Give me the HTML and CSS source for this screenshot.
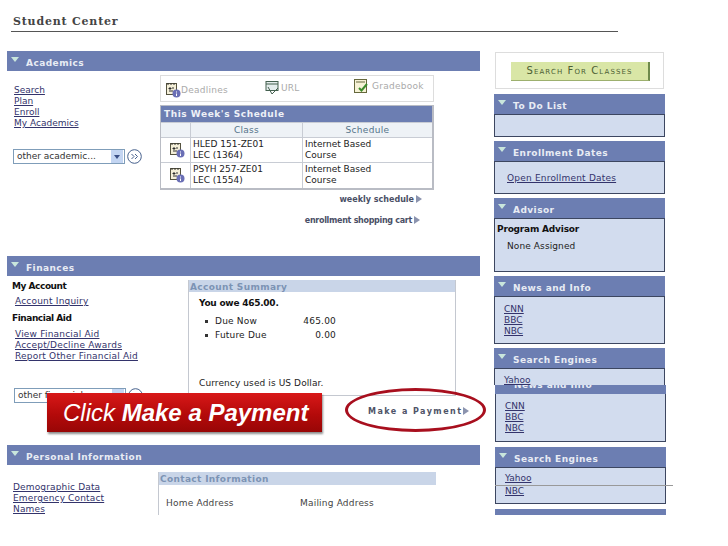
FILE: index.html
```html
<!DOCTYPE html>
<html lang="en">
<head>
    <meta charset="UTF-8">
    <title>Student Center</title>
    <link rel="stylesheet" href="styles.css">
</head>
<body>
    <svg class="defs" width="0" height="0">
        <symbol id="cal-info" viewBox="0 0 16 16">
            <rect x="1.5" y="1.5" width="10" height="11" fill="#f4efd8" stroke="#55533f"/>
            <path d="M3 1v2M6 1v2M9 1v2" stroke="#333"/>
            <path d="M4 6h2v1H4zM7 6h2M4 9h4" stroke="#333"/>
            <circle cx="11.5" cy="11.5" r="4" fill="#6a6fb5"/>
            <path d="M11.5 9.5v1M11.5 11.5v2.5" stroke="#fff"/>
        </symbol>
        <symbol id="go" viewBox="0 0 15 15">
            <circle cx="7.5" cy="7.5" r="6.8" fill="#fff" stroke="#46608c"/>
            <path d="M4.5 5l2.5 2.5L4.5 10M8 5l2.5 2.5L8 10" fill="none" stroke="#46608c"/>
        </symbol>
    </svg>

    <div class="page">
        <h1 class="page-title">Student Center</h1>

        <div class="columns">
            <div class="main">
                <section class="panel academics">
                    <h2 class="bar"><i class="tri"></i>Academics</h2>
                    <div class="panel-body">
                        <div class="left-col">
                            <a href="#">Search</a>
                            <a href="#">Plan</a>
                            <a href="#">Enroll</a>
                            <a href="#">My Academics</a>
                            <div class="picker">
                                <div class="select"><span>other academic...</span><b class="select-arrow"></b></div>
                                <svg class="go"><use href="#go"/></svg>
                            </div>
                        </div>
                        <div class="mid-col">
                            <div class="tools">
                                <span class="tool tool-deadlines"><svg class="tool-icon"><use href="#cal-info"/></svg>Deadlines</span>
                                <span class="tool tool-url">
                                    <svg class="tool-icon" viewBox="0 0 16 16">
                                        <rect x="2" y="1.5" width="12" height="9" fill="#e4ecec" stroke="#44604f"/>
                                        <path d="M2 4h12M4 7l4 7 6-6" fill="none" stroke="#44604f"/>
                                    </svg>URL</span>
                                <span class="tool tool-grades">
                                    <svg class="tool-icon" viewBox="0 0 16 16">
                                        <rect x="1.5" y="1.5" width="12" height="13" fill="#f6f2d6" stroke="#66683c"/>
                                        <path d="M3 4h9" stroke="#66683c"/>
                                        <path d="M6 10l2.5 2.5L14 6" fill="none" stroke="#3c8a2c" stroke-width="2"/>
                                    </svg>Gradebook</span>
                            </div>
                            <div class="schedule">
                                <div class="schedule-title">This Week's Schedule</div>
                                <table>
                                    <tr>
                                        <th class="col-icon"></th>
                                        <th class="col-class">Class</th>
                                        <th>Schedule</th>
                                    </tr>
                                    <tr>
                                        <td class="cell-icon"><svg class="row-icon"><use href="#cal-info"/></svg></td>
                                        <td>HLED 151-ZE01<br>LEC (1364)</td>
                                        <td>Internet Based<br>Course</td>
                                    </tr>
                                    <tr>
                                        <td class="cell-icon"><svg class="row-icon"><use href="#cal-info"/></svg></td>
                                        <td>PSYH 257-ZE01<br>LEC (1554)</td>
                                        <td>Internet Based<br>Course</td>
                                    </tr>
                                </table>
                            </div>
                            <div class="more-link more-weekly">weekly schedule<i class="play"></i></div>
                            <div class="more-link more-cart">enrollment shopping cart<i class="play"></i></div>
                        </div>
                    </div>
                </section>

                <section class="panel finances">
                    <h2 class="bar"><i class="tri"></i>Finances</h2>
                    <div class="panel-body">
                        <div class="left-col fin-left">
                            <strong class="fin-head">My Account</strong>
                            <a href="#">Account Inquiry</a>
                            <strong class="fin-head fin-head-2">Financial Aid</strong>
                            <a href="#">View Financial Aid</a>
                            <a href="#">Accept/Decline Awards</a>
                            <a href="#">Report Other Financial Aid</a>
                            <div class="picker fin-picker">
                                <div class="select"><span>other financial...</span><b class="select-arrow"></b></div>
                                <svg class="go"><use href="#go"/></svg>
                            </div>
                        </div>
                        <div class="summary-col">
                            <div class="summary">
                                <div class="box-head">Account Summary</div>
                                <p class="owe">You owe 465.00.</p>
                                <ul class="dues">
                                    <li><span>Due Now</span><span>465.00</span></li>
                                    <li><span>Future Due</span><span>0.00</span></li>
                                </ul>
                                <p class="currency">Currency used is US Dollar.</p>
                            </div>
                            <div class="pay-link">Make a Payment<i class="play"></i></div>
                        </div>
                    </div>
                </section>

                <section class="panel personal">
                    <h2 class="bar"><i class="tri"></i>Personal Information</h2>
                    <div class="panel-body">
                        <div class="left-col per-left">
                            <a href="#">Demographic Data</a>
                            <a href="#">Emergency Contact</a>
                            <a href="#">Names</a>
                        </div>
                        <div class="contact">
                            <div class="box-head">Contact Information</div>
                            <div class="addresses"><span>Home Address</span><span>Mailing Address</span></div>
                        </div>
                    </div>
                </section>
            </div>

            <aside class="side">
                <div class="search-box"><div class="search-btn">Search For Classes</div></div>

                <section class="card h43"><h3 class="bar"><i class="tri"></i>To Do List</h3></section>
                <section class="card h53">
                    <h3 class="bar"><i class="tri"></i>Enrollment Dates</h3>
                    <a class="card-link" href="#">Open Enrollment Dates</a>
                </section>
                <section class="card h74">
                    <h3 class="bar"><i class="tri"></i>Advisor</h3>
                    <strong class="advisor-head">Program Advisor</strong>
                    <p class="advisor-name">None Assigned</p>
                </section>
                <section class="card h68">
                    <h3 class="bar"><i class="tri"></i>News and Info</h3>
                    <div class="card-links">
                        <a href="#">CNN</a><a href="#">BBC</a><a href="#">NBC</a>
                    </div>
                </section>
                <section class="card h37 open-end">
                    <h3 class="bar"><i class="tri"></i>Search Engines</h3>
                    <div class="card-links yahoo-top"><a href="#">Yahoo</a></div>
                </section>
                <section class="card h57 pasted">
                    <h3 class="bar bar-cut">News and Info</h3>
                    <div class="card-links cut-links">
                        <a href="#">CNN</a><a href="#">BBC</a><a href="#">NBC</a>
                    </div>
                </section>
                <section class="card h57 pasted gap-5">
                    <h3 class="bar"><i class="tri"></i>Search Engines</h3>
                    <div class="card-links engines">
                        <a href="#">Yahoo</a><a href="#">NBC</a>
                    </div>
                </section>
                <div class="bar stub pasted"></div>
            </aside>
        </div>
    </div>

    <div class="callout">Click <b>Make a Payment</b></div>
    <div class="oval"></div>
    <div class="stray-line"></div>
</body>
</html>
```

FILE: styles.css
```css
body {
    font-family: "DejaVu Sans", Verdana, sans-serif;
    font-size: 9px;
    margin: 0;
    padding: 0;
    background-color: #fff;
    color: #222;
    width: 728px;
    height: 546px;
    overflow: hidden;
    position: relative;
}
.defs {
    position: absolute;
}
.page {
    height: 515px;
    overflow: hidden;
}
a {
    color: #33336b;
    text-decoration: underline;
    display: block;
    line-height: 11px;
}
.page-title {
    font-family: "DejaVu Serif", serif;
    font-size: 11px;
    line-height: 14px;
    letter-spacing: 0.8px;
    color: #444;
    margin: 0 0 0 11px;
    padding: 15px 0 2px 2px;
    width: 605px;
    border-bottom: 1px solid #555;
}
.columns {
    display: flex;
    gap: 14px;
    padding: 19px 0 0 7px;
}
.main {
    width: 473px;
    flex: none;
}
.side {
    width: 172px;
    flex: none;
}

/* barras azuis */
.bar {
    background-color: #6c7eb2;
    color: #e8ecf4;
    font-size: 9px;
    font-weight: bold;
    letter-spacing: 0.45px;
    line-height: 24px;
    height: 20px;
    margin: 0;
    padding-left: 19px;
    position: relative;
}
.tri {
    position: absolute;
    left: 4px;
    top: 6px;
    width: 0;
    height: 0;
    border-left: 4px solid transparent;
    border-right: 4px solid transparent;
    border-top: 5px solid #c9e6dc;
}
.panel-body {
    display: flex;
}

.academics {
    height: 205px;
}
.finances {
    height: 189px;
}
.personal {
    height: 70px;
}

.left-col {
    width: 153px;
    flex: none;
    padding: 14px 0 0 7px;
    box-sizing: border-box;
}
.picker {
    display: flex;
    align-items: center;
    gap: 2px;
    margin: 20px 0 0 -1px;
}
.select {
    width: 112px;
    height: 15px;
    box-sizing: border-box;
    border: 1px solid #7f9db9;
    display: flex;
    justify-content: space-between;
    align-items: center;
    padding: 0 1px 0 3px;
    line-height: 13px;
    color: #333;
    overflow: hidden;
    white-space: nowrap;
}
.select-arrow {
    width: 12px;
    height: 13px;
    background-color: #c3d5f2;
    position: relative;
    flex: none;
}
.select-arrow::after {
    content: "";
    position: absolute;
    left: 3px;
    top: 5px;
    border-left: 3px solid transparent;
    border-right: 3px solid transparent;
    border-top: 4px solid #3a4f86;
}
.go {
    width: 15px;
    height: 15px;
    flex: none;
}

.mid-col {
    width: 274px;
    flex: none;
    padding-top: 4px;
}
.tools {
    height: 25px;
    border: 1px solid #ddd;
    display: flex;
    color: #aaa;
    position: relative;
}
.tool {
    display: flex;
    align-items: center;
    height: 22px;
    letter-spacing: 0.25px;
}
.tool-icon {
    width: 16px;
    height: 16px;
    flex: none;
}
.tool-deadlines {
    padding: 3px 0 0 4px;
    width: 99px;
}
.tool-url {
    width: 89px;
    padding-top: 1px;
}
.tool-url .tool-icon {
    margin-right: 1px;
}
.tool-grades {
    margin-top: -1px;
}
.tool-grades .tool-icon {
    margin-right: 3px;
}
.schedule {
    margin-top: 3px;
    border: 1px solid #b9bcc4;
    border-bottom-width: 2px;
    border-right-width: 2px;
    height: 82px;
}
.schedule-title {
    background-color: #6c7eb2;
    color: #eef1f7;
    font-weight: bold;
    letter-spacing: 0.55px;
    line-height: 16px;
    height: 16px;
    padding-left: 3px;
}
.schedule table {
    width: 100%;
    border-collapse: collapse;
    table-layout: fixed;
}
.schedule th {
    background-color: #eef2f6;
    color: #55748a;
    font-weight: normal;
    height: 14px;
    padding: 0;
    letter-spacing: 0.3px;
    border-top: 1px solid #c8ccd4;
    border-left: 1px solid #c8ccd4;
}
.schedule td {
    border-top: 1px solid #c8ccd4;
    border-left: 1px solid #c8ccd4;
    padding: 1px 0 0 2px;
    line-height: 11px;
    height: 25px;
    box-sizing: border-box;
    vertical-align: top;
}
.schedule th:first-child,
.schedule td:first-child {
    border-left: none;
}
.col-icon {
    width: 29px;
}
.col-class {
    width: 111px;
}
.schedule td.cell-icon {
    padding: 4px 0 0 8px;
}
.row-icon {
    width: 16px;
    height: 16px;
    display: block;
}
.more-link {
    color: #4a4f66;
    font-weight: bold;
    font-size: 8px;
    text-align: right;
    line-height: 12px;
}
.more-weekly {
    margin-top: 4px;
    padding-right: 12px;
}
.more-cart {
    margin-top: 9px;
    padding-right: 14px;
    letter-spacing: -0.3px;
}
.play {
    display: inline-block;
    border-top: 4px solid transparent;
    border-bottom: 4px solid transparent;
    border-left: 6px solid #8b93ae;
    margin-left: 2px;
    vertical-align: -1px;
}

.fin-left {
    width: 181px;
    padding: 5px 0 0 5px;
}
.fin-head {
    display: block;
    color: #111;
    line-height: 11px;
    letter-spacing: -0.45px;
}
.fin-left a {
    margin-left: 3px;
    letter-spacing: 0.2px;
}
.fin-left a:nth-of-type(1) {
    margin-top: 4px;
}
.fin-head-2 {
    margin: 6px 0 5px;
}
.fin-picker {
    margin: 26px 0 0 2px;
}
.summary-col {
    width: 268px;
    flex: none;
    padding-top: 4px;
}
.summary {
    height: 116px;
    border: 1px solid #c4c8d0;
    border-top: none;
    box-sizing: border-box;
}
.box-head {
    background-color: #c9d5e8;
    color: #7c93b4;
    font-weight: bold;
    letter-spacing: 0.35px;
    line-height: 14px;
    height: 12px;
    padding-left: 1px;
}
.owe {
    margin: 6px 0 0 10px;
    font-weight: bold;
    line-height: 11px;
    letter-spacing: -0.25px;
    color: #111;
}
.dues {
    margin: 5px 0 0 10px;
    padding: 0;
    list-style: none;
    width: 137px;
}
.dues li {
    display: flex;
    justify-content: space-between;
    line-height: 14px;
    padding-left: 16px;
    position: relative;
    letter-spacing: 0.2px;
}
.dues li::before {
    content: "";
    position: absolute;
    left: 6px;
    top: 6px;
    width: 3px;
    height: 3px;
    background-color: #333;
}
.currency {
    margin: 36px 0 0 10px;
    line-height: 11px;
    letter-spacing: 0.1px;
}
.pay-link {
    color: #4f5468;
    font-weight: bold;
    font-size: 8px;
    letter-spacing: 1.45px;
    line-height: 12px;
    margin-top: 10px;
    padding-left: 180px;
    white-space: nowrap;
}
.pay-link .play {
    margin-left: 1px;
}

.per-left {
    width: 151px;
    padding: 17px 0 0 6px;
}
.per-left a {
    letter-spacing: 0.15px;
}
.contact {
    width: 277px;
    flex: none;
    margin-top: 7px;
    height: 43px;
    border-left: 1px solid #c4c8d0;
}
.contact .box-head {
    height: 13px;
    line-height: 15px;
}
.addresses {
    display: flex;
    padding: 13px 0 0 7px;
    letter-spacing: 0.2px;
    line-height: 11px;
    color: #444;
}
.addresses span {
    width: 134px;
}

/* coluna da direita */
.search-box {
    height: 37px;
    box-sizing: border-box;
    margin: 1px 2px 0 1px;
    border: 1px solid #ddd;
    padding: 9px 0 0 15px;
}
.search-btn {
    width: 139px;
    height: 19px;
    box-sizing: border-box;
    background-color: #d9e6a6;
    border-right: 2px solid #6e8a4c;
    border-bottom: 1px solid #9db06e;
    color: #4c5e34;
    font-size: 10px;
    font-variant: small-caps;
    letter-spacing: 1.1px;
    line-height: 18px;
    text-align: center;
    white-space: nowrap;
}
.card {
    background-color: #d2dcee;
    border-left: 1px solid #3c4660;
    border-right: 1px solid #3c4660;
    border-bottom: 1px solid #3c4660;
    box-sizing: border-box;
    width: 171px;
    margin-bottom: 4px;
    position: relative;
}
.card .bar {
    margin: 0 -1px;
    padding-left: 19px;
    border-bottom: 1px solid #3c4660;
    line-height: 25px;
}
.search-box + .card {
    margin-top: 5px;
}
.h43 { height: 43px; }
.h53 { height: 53px; }
.h74 { height: 74px; }
.h68 { height: 68px; }
.h37 { height: 37px; margin-bottom: 0; }
.h57 { height: 57px; }
.open-end {
    border-bottom: none;
}
.card-link {
    margin: 11px 0 0 12px;
    letter-spacing: 0.2px;
}
.advisor-head {
    display: block;
    margin: 5px 0 0 2px;
    color: #111;
    line-height: 11px;
    letter-spacing: -0.2px;
}
.advisor-name {
    margin: 6px 0 0 12px;
    line-height: 11px;
    letter-spacing: 0.1px;
}
.card-links {
    padding: 7px 0 0 9px;
}
.yahoo-top {
    padding-top: 6px;
}
.pasted {
    margin-left: 1px;
}
.card .bar-cut {
    height: 9px;
    line-height: 0;
    overflow: hidden;
    border-bottom: none;
    padding-left: 19px;
}
.cut-links {
    padding-top: 7px;
}
.engines {
    padding-top: 5px;
}
.engines a + a {
    margin-top: 2px;
}
.gap-5 {
    margin-top: 5px;
}
.stub {
    margin-top: 5px;
    width: 171px;
    box-sizing: border-box;
}

/* anotacoes por cima da tela */
.callout {
    position: absolute;
    left: 47px;
    top: 393px;
    width: 275px;
    height: 39px;
    box-sizing: border-box;
    padding-left: 16px;
    background: linear-gradient(#d81818, #b40a0a 55%, #980606);
    box-shadow: 1px 2px 2px rgba(0, 0, 0, 0.45);
    color: #fff;
    font-family: "Liberation Sans", Arial, sans-serif;
    font-size: 24px;
    font-style: italic;
    line-height: 39px;
    white-space: nowrap;
}
.oval {
    position: absolute;
    left: 345px;
    top: 388px;
    width: 141px;
    height: 44px;
    box-sizing: border-box;
    border: 3px solid #a80f1e;
    border-radius: 50%;
}
.stray-line {
    position: absolute;
    left: 495px;
    top: 485px;
    width: 178px;
    height: 1px;
    background-color: #999;
}
```
